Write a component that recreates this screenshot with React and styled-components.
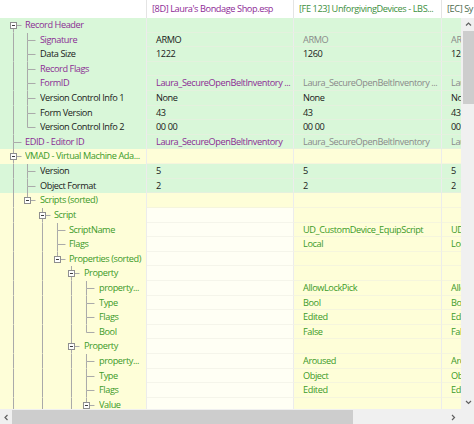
import React from 'react';
import styled, { createGlobalStyle } from 'styled-components';

const ROW_H = 14.62;
const HEAD_H = 18;
const COLS = '147px 147px 148px 150px';
const GRID = '#ececec';
const FONT = '"Open Sans", "Noto Sans", "DejaVu Sans", sans-serif';

const INK = {
  purple: '#8b2d94',
  green: '#3c9a28',
  dark: '#1a1a1a',
  grey: '#8a8a8a',
};
const BG = { green: '#d9f7d9', yellow: '#fefed8', pale: '#fffff4' };

const Global = createGlobalStyle`
  *, *::before, *::after { box-sizing: border-box; }
  html, body { margin: 0; padding: 0; background: #fff; overflow: hidden; }
  body { font-family: ${FONT}; }
`;

const Frame = styled.div`
  width: 474px;
  height: 424px;
  display: flex;
  flex-direction: column;
  overflow: hidden;
  font-family: ${FONT};
  font-size: 9.2px;
  letter-spacing: -0.42px;
  background: #fff;
`;

const Header = styled.div`
  height: ${HEAD_H}px;
  flex: none;
  display: grid;
  grid-template-columns: ${COLS};
  background: #fff;
  overflow: hidden;
`;

const HeadCell = styled.div`
  border-right: 1px solid #e4e4e4;
  padding: 0 3px 0 5px;
  line-height: ${HEAD_H}px;
  color: ${(p) => p.$color};
  white-space: nowrap;
  overflow: hidden;
`;

const Body = styled.div`
  flex: 1;
  display: flex;
  min-height: 0;
`;

const Viewport = styled.div`
  flex: 1;
  min-width: 0;
  overflow: hidden;
`;

const Row = styled.div`
  display: grid;
  grid-template-columns: ${COLS};
  height: ${ROW_H}px;
  background: ${(p) => BG[p.$tone]};
`;

const NameCell = styled.div`
  display: flex;
  align-items: center;
  border-right: 1px solid ${GRID};
  white-space: nowrap;
  overflow: hidden;
  color: ${(p) => INK[p.$ink]};
  line-height: ${ROW_H}px;
`;

const Label = styled.span`
  overflow: hidden;
  padding-right: 2px;
`;

const Glyph = styled.svg`
  flex: none;
  display: block;
  stroke: #a9a9a9;
  stroke-width: 1;
`;

const Cell = styled.div`
  padding-left: 9px;
  border-right: 1px solid ${GRID};
  border-bottom: 1px solid rgba(236, 236, 226, 0.55);
  background: ${(p) => (p.$pale ? BG.pale : 'transparent')};
  color: ${(p) => INK[p.$ink] || INK.dark};
  line-height: ${ROW_H - 1}px;
  white-space: nowrap;
  overflow: hidden;
`;

const VBar = styled.div`
  width: 13px;
  flex: none;
  background: #f0f0f0;
  display: flex;
  flex-direction: column;
`;

const VArrow = styled.div`
  height: 13px;
  flex: none;
  display: flex;
  align-items: center;
  justify-content: center;
  padding-left: 2px;
`;

const VThumb = styled.div`
  height: 73px;
  flex: none;
  margin-left: 2px;
  background: #cdcdcd;
`;

const Track = styled.div`
  flex: 1;
`;

const HBar = styled.div`
  height: 15px;
  flex: none;
  display: flex;
  background: #f0f0f0;
`;

const HArrow = styled.div`
  width: ${(p) => p.$w}px;
  flex: none;
  display: flex;
  align-items: center;
  justify-content: center;
  padding-top: 1px;
`;

const HThumb = styled.div`
  width: 341px;
  flex: none;
  margin-top: 1px;
  background: #cdcdcd;
`;

const Corner = styled.div`
  width: 13px;
  flex: none;
  background: #f0f0f0;
`;

const Chevron = ({ dir }) => {
  const pts = {
    up: '1,4.5 3.5,2 6,4.5',
    down: '1,2 3.5,4.5 6,2',
    left: '4.5,1 2,3.5 4.5,6',
    right: '2,1 4.5,3.5 2,6',
  }[dir];
  return (
    <svg width="7" height="7" viewBox="0 0 7 7">
      <polyline points={pts} fill="none" stroke="#606060" strokeWidth="1.2" />
    </svg>
  );
};

const LX = (L) => Math.round(12.5 + L * 14.7) + 0.5;
const TX = (L) => Math.round(25 + L * 14.7);

function TreeGlyph({ row }) {
  const { level, anc, hasNext, first, open } = row;
  const w = TX(level);
  const h = ROW_H;
  const mid = 7.5;
  const x = LX(level);
  return (
    <Glyph width={w} height={h} viewBox={`0 0 ${w} ${h}`}>
      {anc.map((more, a) =>
        more ? <line key={a} x1={LX(a)} x2={LX(a)} y1={0} y2={h} /> : null
      )}
      {!first && <line x1={x} x2={x} y1={0} y2={mid} />}
      {hasNext && <line x1={x} x2={x} y1={mid} y2={h} />}
      <line x1={x} x2={x + 8} y1={mid} y2={mid} />
      {open && (
        <>
          <rect x={x - 3} y={mid - 3} width={6} height={6} fill="#fff" stroke="#8e8e8e" />
          <line x1={x - 1.5} x2={x + 1.5} y1={mid} y2={mid} stroke="#3a3a3a" />
        </>
      )}
    </Glyph>
  );
}

const same = (t, ink = 'dark') => [
  [t, ink],
  [t, ink],
  [t, ink],
];
const grn = (t) => [
  ['', 'green'],
  [t, 'green'],
  [t, 'green'],
];

const tree = [
  {
    n: 'Record Header',
    ink: 'purple',
    tone: 'green',
    kids: [
      { n: 'Signature', ink: 'purple', vals: [['ARMO', 'dark'], ['ARMO', 'grey'], ['ARMO', 'grey']] },
      { n: 'Data Size', ink: 'dark', vals: [['1222', 'dark'], ['1260', 'dark'], ['1260', 'dark']] },
      { n: 'Record Flags', ink: 'purple' },
      {
        n: 'FormID',
        ink: 'purple',
        vals: [
          ['Laura_SecureOpenBeltInventory ...', 'purple'],
          ['Laura_SecureOpenBeltInventory ...', 'grey'],
          ['Laura_SecureOpenBeltInventory', 'grey'],
        ],
      },
      { n: 'Version Control Info 1', ink: 'dark', vals: same('None') },
      { n: 'Form Version', ink: 'dark', vals: same('43') },
      { n: 'Version Control Info 2', ink: 'dark', vals: same('00 00') },
    ],
  },
  {
    n: 'EDID - Editor ID',
    ink: 'purple',
    tone: 'green',
    vals: [
      ['Laura_SecureOpenBeltInventory', 'purple'],
      ['Laura_SecureOpenBeltInventory', 'grey'],
      ['Laura_SecureOpenBeltInventory', 'grey'],
    ],
  },
  {
    n: 'VMAD - Virtual Machine Ada...',
    ink: 'green',
    tone: 'yellow',
    more: true,
    kids: [
      { n: 'Version', ink: 'dark', tone: 'green', vals: same('5') },
      { n: 'Object Format', ink: 'dark', tone: 'green', vals: same('2') },
      {
        n: 'Scripts (sorted)',
        kids: [
          {
            n: 'Script',
            pale: true,
            more: true,
            kids: [
              { n: 'ScriptName', vals: grn('UD_CustomDevice_EquipScript') },
              { n: 'Flags', vals: grn('Local') },
              {
                n: 'Properties (sorted)',
                kids: [
                  {
                    n: 'Property',
                    kids: [
                      { n: 'property...', vals: grn('AllowLockPick') },
                      { n: 'Type', vals: grn('Bool') },
                      { n: 'Flags', vals: grn('Edited') },
                      { n: 'Bool', vals: grn('False') },
                    ],
                  },
                  {
                    n: 'Property',
                    more: true,
                    kids: [
                      { n: 'property...', vals: grn('Aroused') },
                      { n: 'Type', vals: grn('Object') },
                      { n: 'Flags', vals: grn('Edited') },
                      { n: 'Value', open: true },
                    ],
                  },
                ],
              },
            ],
          },
        ],
      },
    ],
  },
];

function flatten(nodes, level = 0, anc = [], inherit = {}) {
  const out = [];
  nodes.forEach((node, i) => {
    const hasNext = i < nodes.length - 1 || !!node.more;
    const ink = node.ink || inherit.ink || 'green';
    const tone = node.tone || inherit.tone || 'yellow';
    const pale = node.pale ?? inherit.pale ?? false;
    out.push({
      n: node.n,
      ink,
      tone,
      pale,
      vals: node.vals || [],
      level,
      anc,
      hasNext,
      first: level === 0 && i === 0,
      open: !!node.kids || !!node.open,
    });
    if (node.kids) {
      out.push(
        ...flatten(node.kids, level + 1, [...anc, hasNext], {
          ink: ink === 'green' ? 'green' : undefined,
          tone: node.tone === 'green' ? 'green' : tone,
          pale,
        })
      );
    }
  });
  return out;
}

const rows = flatten(tree);

const headers = [
  ['', INK.dark],
  ["[8D] Laura's Bondage Shop.esp", '#8e2a96'],
  ['[FE 123] UnforgivingDevices - LBS...', '#3d8f3d'],
  ['[EC] Sy', '#4d6b4d'],
];

export default function App() {
  return (
    <>
      <Global />
      <Frame>
        <Header>
          {headers.map(([t, c], i) => (
            <HeadCell key={i} $color={c}>
              {t}
            </HeadCell>
          ))}
        </Header>
        <Body>
          <Viewport>
            {rows.map((r, i) => (
              <Row key={i} $tone={r.tone}>
                <NameCell $ink={r.ink}>
                  <TreeGlyph row={r} />
                  <Label>{r.n}</Label>
                </NameCell>
                {[0, 1, 2].map((c) => {
                  const v = r.vals[c] || ['', 'dark'];
                  return (
                    <Cell key={c} $ink={v[1]} $pale={c === 0 && r.pale}>
                      {v[0]}
                    </Cell>
                  );
                })}
              </Row>
            ))}
          </Viewport>
          <VBar>
            <VArrow>
              <Chevron dir="up" />
            </VArrow>
            <VThumb />
            <Track />
            <VArrow>
              <Chevron dir="down" />
            </VArrow>
          </VBar>
        </Body>
        <HBar>
          <HArrow $w={12}>
            <Chevron dir="left" />
          </HArrow>
          <HThumb />
          <Track />
          <HArrow $w={15}>
            <Chevron dir="right" />
          </HArrow>
          <Corner />
        </HBar>
      </Frame>
    </>
  );
}
